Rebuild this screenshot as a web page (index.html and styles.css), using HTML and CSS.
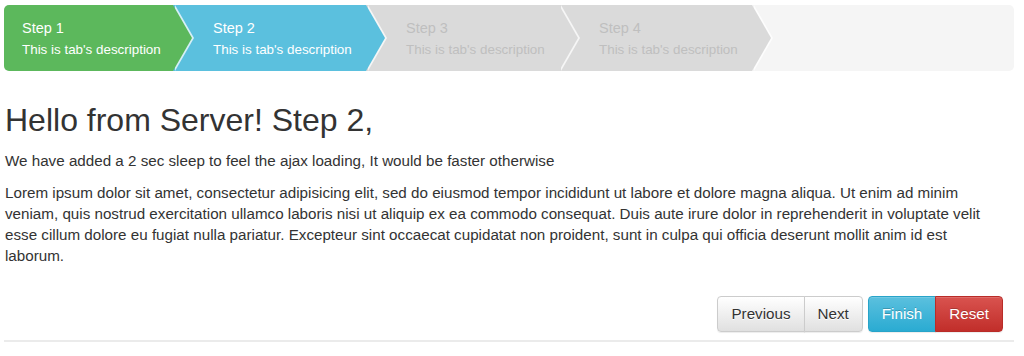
FILE: index.html
```html
<!DOCTYPE html>
<html lang="en">
<head>
<meta charset="utf-8">
<title>Wizard</title>
<link rel="stylesheet" href="styles.css">
</head>
<body>
<div class="page">
  <ul class="steps">
    <li class="step step-done first"><span class="step-title">Step 1</span><span class="step-desc">This is tab's description</span></li>
    <li class="step step-active"><span class="step-title">Step 2</span><span class="step-desc">This is tab's description</span></li>
    <li class="step step-todo"><span class="step-title">Step 3</span><span class="step-desc">This is tab's description</span></li>
    <li class="step step-todo last"><span class="step-title">Step 4</span><span class="step-desc">This is tab's description</span></li>
  </ul>
  <div class="content">
    <h3 class="heading">Hello from Server! Step 2,</h3>
    <p class="note">We have added a 2 sec sleep to feel the ajax loading, It would be faster otherwise</p>
    <p class="lorem">Lorem ipsum dolor sit amet, consectetur adipisicing elit, sed do eiusmod tempor incididunt ut labore et dolore magna aliqua. Ut enim ad minim veniam, quis nostrud exercitation ullamco laboris nisi ut aliquip ex ea commodo consequat. Duis aute irure dolor in reprehenderit in voluptate velit esse cillum dolore eu fugiat nulla pariatur. Excepteur sint occaecat cupidatat non proident, sunt in culpa qui officia deserunt mollit anim id est laborum.</p>
  </div>
  <div class="toolbar">
    <div class="btn-group">
      <button class="btn btn-default">Previous</button>
      <button class="btn btn-default">Next</button>
    </div>
    <div class="btn-group">
      <button class="btn btn-info">Finish</button>
      <button class="btn btn-danger">Reset</button>
    </div>
  </div>
  <div class="rule"></div>
</div>
</body>
</html>
```
FILE: styles.css
```css
* { box-sizing: border-box; }
html, body { margin: 0; padding: 0; background: #fff; }
body {
  font-family: "Liberation Sans", Arial, sans-serif;
  font-size: 15.2px;
  line-height: 21.3px;
  color: #333;
}
.page {
  width: 1010px;
  margin-left: 4px;
  padding-top: 5px;
}
.steps {
  list-style: none;
  margin: 0;
  padding: 0;
  display: flex;
  height: 66px;
  background: #f5f5f5;
  border-radius: 5px;
  overflow: hidden;
}
.step {
  position: relative;
  height: 66px;
  width: 193px;
  padding: 13px 0 0 40px;
  display: flex;
  flex-direction: column;
  flex: none;
}
.step.first { width: 169px; padding-left: 18px; z-index: 4; }
.step-active { z-index: 3; }
.step-todo { z-index: 2; }
.step.last { z-index: 1; }
.step::before,
.step::after {
  content: "";
  position: absolute;
  top: 0;
  width: 0;
  height: 0;
  border-top: 33px solid transparent;
  border-bottom: 33px solid transparent;
  border-left: 19px solid transparent;
}
.step::after { left: 100%; z-index: 2; }
.step::before { left: calc(100% + 1.5px); z-index: 1; border-left-color: rgba(255,255,255,0.75); }
.step-done { background: #5cb85c; color: #fff; }
.step-done::after { border-left-color: #5cb85c; }
.step-active { background: #5bc0de; color: #fff; }
.step-active::after { border-left-color: #5bc0de; }
.step-todo { background: #dadada; color: #bfbfbf; }
.step-todo::after { border-left-color: #dadada; }
.step-title {
  font-size: 14.5px;
  line-height: 20px;
}
.step-desc {
  font-size: 13.4px;
  line-height: 24px;
  white-space: nowrap;
}
.content { width: 1000px; padding: 0 0 0 1px; }
.heading {
  margin: 32px 0 12px;
  font-size: 32px;
  line-height: 35.2px;
  font-weight: 500;
  color: #333;
}
.note { margin: 0 0 10px; }
.lorem { margin: 0; }
.toolbar {
  display: flex;
  justify-content: flex-end;
  gap: 5px;
  margin-top: 29px;
  padding-right: 11px;
}
.btn-group { display: flex; }
.btn {
  font-family: inherit;
  font-size: 15.2px;
  line-height: 21.3px;
  padding: 6.4px 13px;
  border: 1px solid transparent;
  margin: 0;
  cursor: pointer;
  box-shadow: inset 0 1px 0 rgba(255,255,255,.15), 0 1px 1px rgba(0,0,0,.075);
}
.btn-group .btn:first-child { border-radius: 4px 0 0 4px; }
.btn-group .btn:last-child { border-radius: 0 4px 4px 0; margin-left: -1px; }
.btn-default {
  color: #333;
  background: linear-gradient(to bottom, #fff 0, #e0e0e0 100%);
  border-color: #ccc;
  text-shadow: 0 1px 0 #fff;
}
.btn-info {
  color: #fff;
  background: linear-gradient(to bottom, #5bc0de 0, #2aabd2 100%);
  border-color: #28a4c9;
  text-shadow: 0 -1px 0 rgba(0,0,0,.2);
}
.btn-danger {
  color: #fff;
  background: linear-gradient(to bottom, #d9534f 0, #c12e2a 100%);
  border-color: #b92c28;
  text-shadow: 0 -1px 0 rgba(0,0,0,.2);
}
.rule {
  margin-top: 8px;
  height: 2px;
  background: #ebebeb;
}
```
